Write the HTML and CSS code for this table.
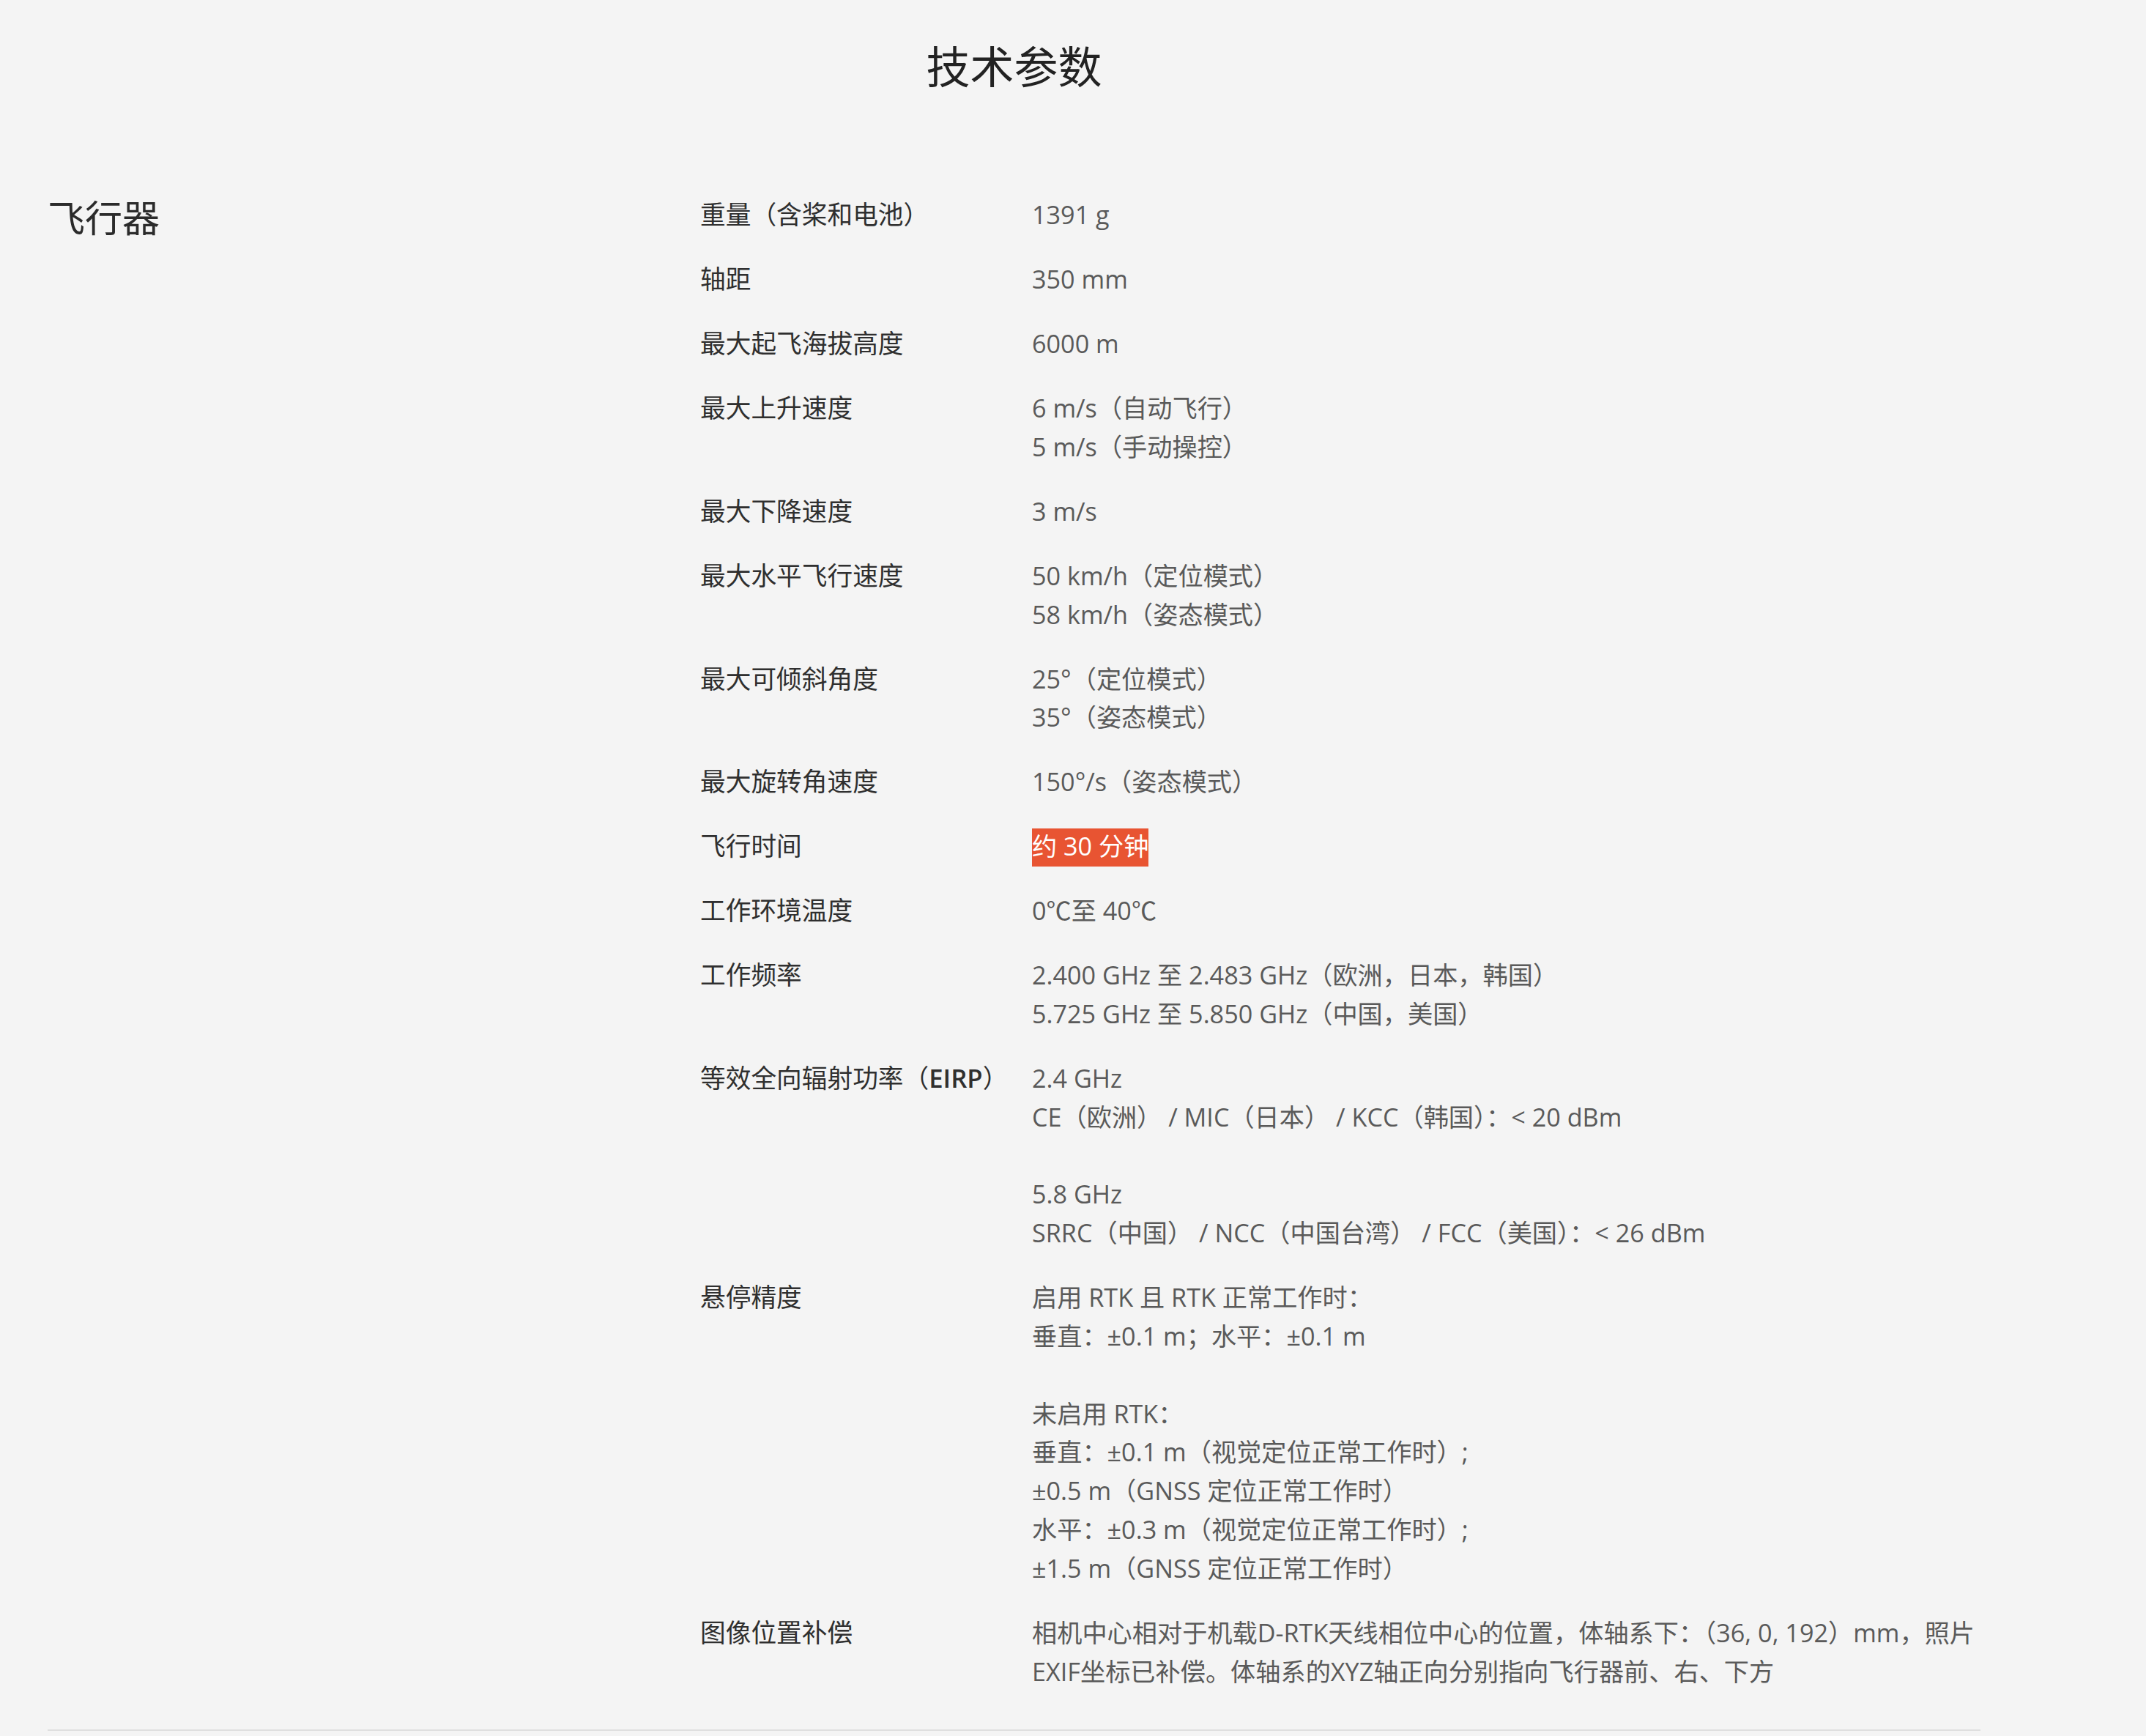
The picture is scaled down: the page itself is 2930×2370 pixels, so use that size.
FILE: index.html
```html
<!DOCTYPE html>
<html lang="zh-CN">
<head>
<meta charset="utf-8">
<title>技术参数</title>
<link rel="stylesheet" href="styles.css">
</head>
<body>
<div class="page">
  <h1 class="page-title">技术参数</h1>
  <section class="spec-section">
    <h2 class="section-title">飞行器</h2>
    <dl class="spec-list">
      <div class="spec-row"><dt>重量（含桨和电池）</dt><dd>1391 g</dd></div>
      <div class="spec-row"><dt>轴距</dt><dd>350 mm</dd></div>
      <div class="spec-row"><dt>最大起飞海拔高度</dt><dd>6000 m</dd></div>
      <div class="spec-row"><dt>最大上升速度</dt><dd>6 m/s（自动飞行）<br>5 m/s（手动操控）</dd></div>
      <div class="spec-row"><dt>最大下降速度</dt><dd>3 m/s</dd></div>
      <div class="spec-row"><dt>最大水平飞行速度</dt><dd>50 km/h（定位模式）<br>58 km/h（姿态模式）</dd></div>
      <div class="spec-row"><dt>最大可倾斜角度</dt><dd>25°（定位模式）<br>35°（姿态模式）</dd></div>
      <div class="spec-row"><dt>最大旋转角速度</dt><dd>150°/s（姿态模式）</dd></div>
      <div class="spec-row"><dt>飞行时间</dt><dd><span class="highlight">约 30 分钟</span></dd></div>
      <div class="spec-row"><dt>工作环境温度</dt><dd>0℃至 40℃</dd></div>
      <div class="spec-row"><dt>工作频率</dt><dd>2.400 GHz 至 2.483 GHz（欧洲，日本，韩国）<br>5.725 GHz 至 5.850 GHz（中国，美国）</dd></div>
      <div class="spec-row"><dt>等效全向辐射功率（<b>EIRP</b>）</dt><dd>2.4 GHz<br>CE（欧洲） / MIC（日本） / KCC（韩国）：&lt; 20 dBm<br><br>5.8 GHz<br>SRRC（中国） / NCC（中国台湾） / FCC（美国）：&lt; 26 dBm</dd></div>
      <div class="spec-row"><dt>悬停精度</dt><dd>启用 RTK 且 RTK 正常工作时：<br>垂直：±0.1 m；水平：±0.1 m<br><br>未启用 RTK：<br>垂直：±0.1 m（视觉定位正常工作时）;<br>±0.5 m（GNSS 定位正常工作时）<br>水平：±0.3 m（视觉定位正常工作时）;<br>±1.5 m（GNSS 定位正常工作时）</dd></div>
      <div class="spec-row"><dt>图像位置补偿</dt><dd>相机中心相对于机载D-RTK天线相位中心的位置，体轴系下：（36, 0, 192）mm，照片EXIF坐标已补偿。体轴系的XYZ轴正向分别指向飞行器前、右、下方</dd></div>
    </dl>
  </section>
</div>
</body>
</html>
```

FILE: styles.css
```css
html, body {
  margin: 0;
  padding: 0;
  background: #f4f4f4;
}

body {
  font-family: "Open Sans", "Noto Sans CJK SC", sans-serif;
  color: #333;
}

.page {
  width: 2639px;
  margin-left: 65px;
}

.page-title {
  margin: 0;
  padding-top: 51px;
  font-size: 60px;
  line-height: 80px;
  font-weight: 400;
  color: #222;
  text-align: center;
}

.spec-section {
  display: grid;
  grid-template-columns: 891px 1fr;
  margin-top: 136px;
  padding-bottom: 17px;
  border-bottom: 2px solid #dfdfdf;
}

.section-title {
  margin: 0;
  font-size: 51px;
  line-height: 60px;
  font-weight: 400;
  color: #2b2b2b;
}

.spec-list {
  margin: 0;
}

.spec-row {
  display: grid;
  grid-template-columns: 453px 1fr;
  padding-bottom: 35.2px;
  font-size: 34.2px;
  line-height: 52.8px;
}

.spec-row dt {
  font-size: 34.7px;
  color: #2f2f2f;
}

.spec-row dt b {
  font-weight: 600;
}

.spec-row dd {
  margin: 0;
  color: #5a5a5a;
}

.highlight {
  background: #e85432;
  color: #fff;
  padding-bottom: 5px;
}
```
